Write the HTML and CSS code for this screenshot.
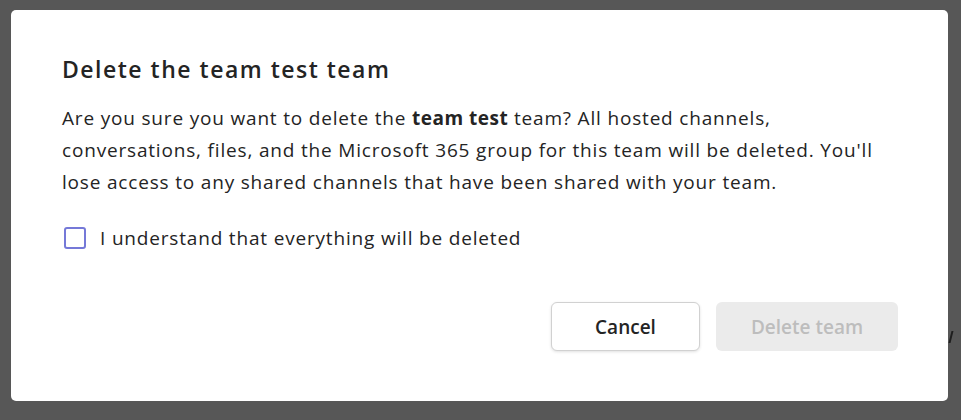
FILE: index.html
```html
<!DOCTYPE html>
<html lang="en">
<head>
    <meta charset="UTF-8">
    <meta name="viewport" content="width=device-width, initial-scale=1.0">
    <title>Delete team</title>
    <link rel="stylesheet" href="styles.css">
</head>
<body>
    <div class="backdrop">
        <div id="dialog">
            <h1 class="title">Delete the team test team</h1>
            <p class="message">Are you sure you want to delete the <b>team test</b> team? All hosted channels, conversations, files, and the Microsoft 365 group for this team will be deleted. You'll lose access to any shared channels that have been shared with your team.</p>
            <label class="confirm">
                <span class="box"></span>
                <span>I understand that everything will be deleted</span>
            </label>
            <div class="actions">
                <button class="btn cancel">Cancel</button>
                <button class="btn danger" disabled>Delete team</button>
            </div>
        </div>
        <span class="stray"></span>
    </div>
</body>
</html>
```

FILE: styles.css
```css
body {
    margin: 0;
    background: #575757;
    font-family: 'Open Sans', 'Noto Sans', sans-serif;
    color: #242424;
}

.backdrop {
    position: relative;
    height: 420px;
    padding: 10px 0 0 11px;
    box-sizing: border-box;
}

#dialog {
    width: 937px;
    height: 391px;
    box-sizing: border-box;
    padding: 44px 50px 50px 51px;
    background: #fff;
    border-radius: 5px;
    display: flex;
    flex-direction: column;
}

.title {
    margin: 0;
    font-size: 23px;
    font-weight: 600;
    line-height: 30px;
    letter-spacing: 1.5px;
    color: #242424;
}

.message {
    margin: 18px 0 0;
    font-size: 19px;
    line-height: 32px;
    letter-spacing: 0.82px;
    max-width: 825px;
}

.message b {
    font-weight: 700;
    letter-spacing: 0.5px;
}

.confirm {
    display: flex;
    align-items: center;
    gap: 14px;
    margin-top: 27px;
    margin-left: 2px;
    font-size: 19px;
    line-height: 26px;
    letter-spacing: 0.82px;
}

.box {
    width: 18px;
    height: 18px;
    border: 2px solid #7579d8;
    border-radius: 3px;
}

.actions {
    margin-top: auto;
    display: flex;
    justify-content: flex-end;
    gap: 16px;
}

.btn {
    height: 49px;
    font-family: inherit;
    font-size: 19px;
    font-weight: 600;
    border-radius: 6px;
}

.cancel {
    width: 149px;
    background: #fff;
    color: #242424;
    border: 1px solid #d1d1d1;
    box-shadow: 0 1px 3px rgba(0, 0, 0, 0.12);
}

.danger {
    width: 182px;
    background: #ebebeb;
    color: #bdbdbd;
    border: none;
}

.stray {
    position: absolute;
    left: 950px;
    top: 331px;
    width: 2px;
    height: 12px;
    background: #1e1e1e;
    transform: skewX(-14deg);
}
```
